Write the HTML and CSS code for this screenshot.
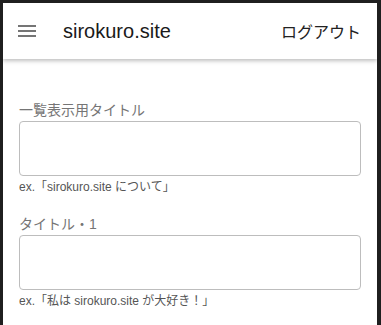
FILE: index.html
```html
<!DOCTYPE html>
<html lang="ja">
<head>
  <meta charset="UTF-8">
  <meta name="viewport" content="width=device-width, initial-scale=1.0">
  <link rel="stylesheet" href="styles.css">
</head>
<body>

<div class="app">
  <!-- ヘッダー -->
  <header class="appbar">
    <button class="menu-btn" aria-label="menu">
      <svg width="24" height="24" viewBox="0 0 24 24">
        <rect x="3" y="6" width="18" height="2" fill="#757575"/>
        <rect x="3" y="11" width="18" height="2" fill="#757575"/>
        <rect x="3" y="16" width="18" height="2" fill="#757575"/>
      </svg>
    </button>
    <div class="site-title">sirokuro.site</div>
    <a class="logout">ログアウト</a>
  </header>

  <!-- フォーム -->
  <main class="content">
    <div class="field">
      <label class="field-label">一覧表示用タイトル</label>
      <textarea class="field-input"></textarea>
      <div class="field-help">ex.「sirokuro.site について」</div>
    </div>

    <div class="field">
      <label class="field-label">タイトル・1</label>
      <textarea class="field-input"></textarea>
      <div class="field-help">ex.「私は sirokuro.site が大好き！」</div>
    </div>
  </main>
</div>

</body>
</html>
```

FILE: styles.css
```css
html, body {
  margin: 0;
  height: 100%;
}

body {
  background: #1f1f1f;
  padding: 3px 4px 0 3px;
  box-sizing: border-box;
  font-family: "Liberation Sans", "Noto Sans CJK JP", sans-serif;
}

.app {
  background: #fff;
  height: 100%;
  overflow: hidden;
}

.appbar {
  height: 56px;
  display: flex;
  align-items: center;
  padding: 0 16px 0 12px;
  background: #fff;
  box-shadow: 0 2px 4px rgba(0,0,0,0.25);
  position: relative;
  z-index: 1;
}

.menu-btn {
  width: 24px;
  height: 24px;
  padding: 0;
  border: none;
  background: none;
  display: flex;
  cursor: pointer;
}

.site-title {
  margin-left: 24px;
  font-size: 20px;
  color: #1a1a1a;
  flex: 1;
}

.logout {
  font-size: 16px;
  color: #222;
  cursor: pointer;
}

.content {
  padding: 42px 16px 0 16px;
}

.field {
  display: flex;
  flex-direction: column;
  margin-bottom: 20px;
}

.field-label {
  font-size: 14px;
  line-height: 18px;
  color: #757575;
  margin-bottom: 2px;
}

.field-input {
  height: 55px;
  box-sizing: border-box;
  border: 1px solid #bdbdbd;
  border-radius: 4px;
  resize: none;
  font: inherit;
  margin: 0;
}

.field-help {
  font-size: 12px;
  line-height: 16px;
  color: #555;
  margin-top: 3px;
}
```
